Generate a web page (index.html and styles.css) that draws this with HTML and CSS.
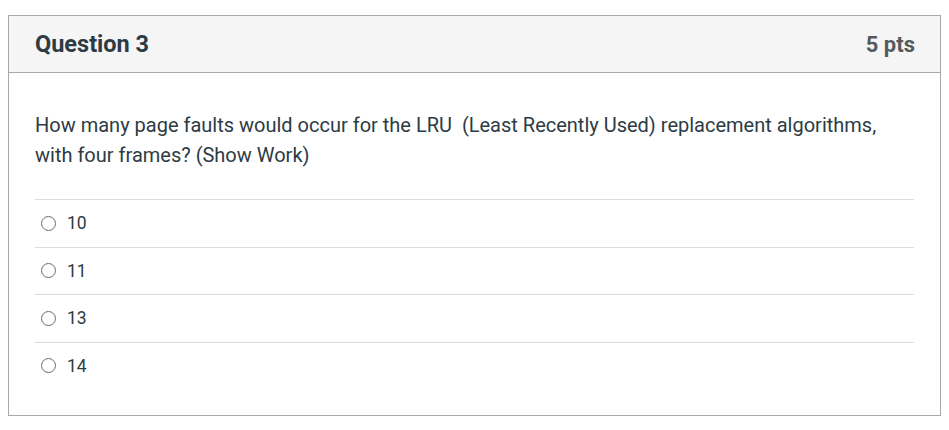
FILE: index.html
```html
<!DOCTYPE html>
<html>
<head>
<meta charset="utf-8">
<link rel="stylesheet" href="styles.css">
</head>
<body>
<div class="card">
  <div class="card-header">
    <h2 class="title">Question 3</h2>
    <span class="pts">5 pts</span>
  </div>
  <div class="card-body">
    <p class="question">How many page faults would occur for the LRU&nbsp; (Least Recently Used) replacement algorithms, with four frames? (Show Work)</p>
    <ul class="answers">
      <li class="answer"><span class="radio"></span><span class="label">10</span></li>
      <li class="answer"><span class="radio"></span><span class="label">11</span></li>
      <li class="answer"><span class="radio"></span><span class="label">13</span></li>
      <li class="answer"><span class="radio"></span><span class="label">14</span></li>
    </ul>
  </div>
</div>
</body>
</html>
```
FILE: styles.css
```css
html, body {
  margin: 0;
  padding: 0;
  background: #fff;
}
body {
  padding: 15px 8px 0 8px;
  font-family: Roboto, "Liberation Sans", sans-serif;
  color: #2d3b45;
}
.card {
  width: 931px;
  border: 1px solid #a8a8a8;
  box-sizing: content-box;
}
.card-header {
  display: flex;
  align-items: center;
  justify-content: space-between;
  height: 56px;
  padding: 0 25px 0 26px;
  background: #f5f5f5;
  border-bottom: 1px solid #a8a8a8;
}
.title {
  margin: 0;
  font-size: 23.5px;
  font-weight: 700;
  color: #2d3b45;
}
.pts {
  font-size: 22px;
  font-weight: 700;
  color: #555a5e;
}
.card-body {
  padding: 37px 26px 26px 26px;
}
.question {
  margin: 0 0 29px 0;
  font-size: 20px;
  line-height: 30px;
  color: #2d3b45;
}
.answers {
  list-style: none;
  margin: 0;
  padding: 0;
}
.answer {
  display: flex;
  align-items: center;
  height: 46.5px;
  border-top: 1px solid #dcdcdc;
  font-size: 17.5px;
}
.radio {
  width: 15px;
  height: 15px;
  border: 1px solid #6b6b6b;
  border-radius: 50%;
  margin-left: 6px;
  margin-right: 11px;
  box-sizing: border-box;
}
.label {
  color: #2d3b45;
}
```
